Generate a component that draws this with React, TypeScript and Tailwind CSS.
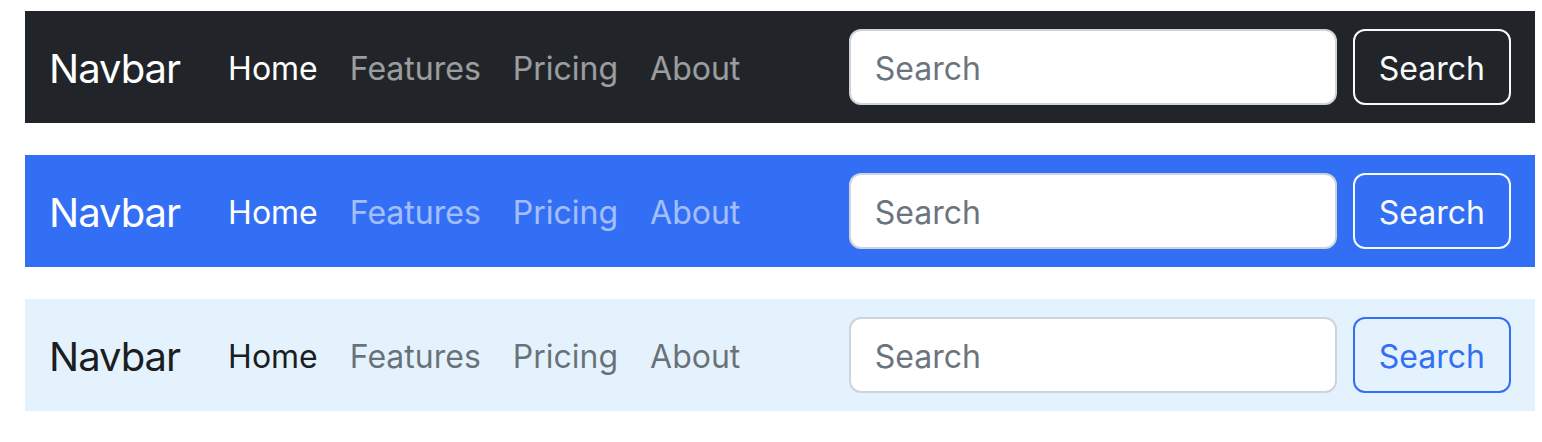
const links = ['Home', 'Features', 'Pricing', 'About'];

type Variant = {
  bg: string;
  brand: string;
  active: string;
  link: string;
  btn: string;
};

const variants: Variant[] = [
  {
    bg: 'bg-[#212529]',
    brand: 'text-white',
    active: 'text-white',
    link: 'text-white/55',
    btn: 'border-[#f8f9fa] text-[#f8f9fa]',
  },
  {
    bg: 'bg-[#336ff5]',
    brand: 'text-white',
    active: 'text-white',
    link: 'text-white/55',
    btn: 'border-[#f8f9fa] text-[#f8f9fa]',
  },
  {
    bg: 'bg-[#e3f2fd]',
    brand: 'text-black/90',
    active: 'text-black/90',
    link: 'text-black/55',
    btn: 'border-[#336ff5] text-[#336ff5]',
  },
];

function Navbar({ v }: { v: Variant }) {
  return (
    <nav className={`${v.bg} h-[112px] w-[1510px] flex items-center justify-between px-[24px]`}>
      <div className="flex items-center">
        <a className={`${v.brand} text-[40px] leading-[60px] pt-[12px] pb-[8px] mr-[32px] tracking-[-1px]`}>Navbar</a>
        <ul className="flex items-center">
          {links.map((l, i) => (
            <li key={l}>
              <a className={`${i === 0 ? v.active : v.link} block text-[32px] leading-[48px] px-[16px] pt-[18px] pb-[14px]`}>{l}</a>
            </li>
          ))}
        </ul>
      </div>
      <form className="flex items-center" onSubmit={e => e.preventDefault()}>
        <input
          className="w-[488px] h-[76px] mr-[16px] rounded-[12px] border-2 border-[#ced4da] bg-white px-[24px] pt-[2px] text-[32px] text-[#212529] placeholder:text-[#6c757d] outline-none"
          placeholder="Search"
        />
        <button type="submit" className={`${v.btn} h-[76px] px-[24px] pt-[3px] rounded-[12px] border-2 bg-transparent text-[32px] leading-[48px]`}>
          Search
        </button>
      </form>
    </nav>
  );
}

export default function App() {
  return (
    <div className="min-h-[442px] bg-white pt-[11px] pl-[25px] flex flex-col gap-[32px] font-['Inter','Noto_Sans',sans-serif]">
      {variants.map((v, i) => <Navbar key={i} v={v} />)}
    </div>
  );
}
